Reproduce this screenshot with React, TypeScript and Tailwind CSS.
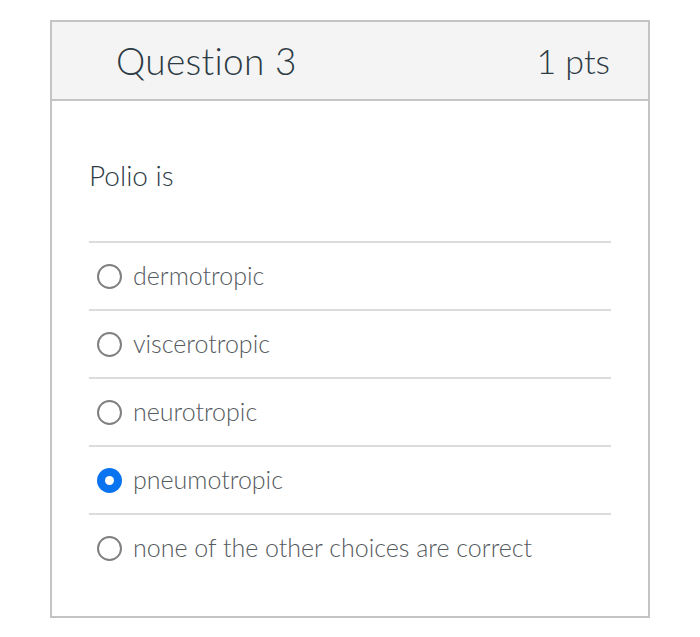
const options = [
  { label: "dermotropic", checked: false },
  { label: "viscerotropic", checked: false },
  { label: "neurotropic", checked: false },
  { label: "pneumotropic", checked: true },
  { label: "none of the other choices are correct", checked: false },
];

function Radio({ checked }: { checked: boolean }) {
  if (checked) {
    return (
      <span className="flex h-[25px] w-[25px] shrink-0 items-center justify-center rounded-full bg-[#0a74f0]">
        <span className="h-[9px] w-[9px] rounded-full bg-white" />
      </span>
    );
  }
  return (
    <span className="h-[25px] w-[25px] shrink-0 rounded-full border-[2.5px] border-[#808080] bg-white" />
  );
}

export default function App() {
  return (
    <div className="min-h-screen bg-white pt-[20px] font-['Lato','Noto_Sans',sans-serif] font-light">
      <div className="ml-[50px] w-[600px] border-2 border-[#c4c4c4] bg-white">
        <div className="flex h-[79px] items-center justify-between border-b-2 border-[#c4c4c4] bg-[#f4f4f4] pl-[64px] pr-[38px] text-[#2d3b45]">
          <h2 className="text-[37px] tracking-[0.3px]">Question 3</h2>
          <span className="text-[34px]">1 pts</span>
        </div>
        <div className="px-[37px] pb-[35px] pt-[54px]">
          <p className="mb-[46px] text-[28px] leading-[40px] text-[#2d3b45]">Polio is</p>
          <div>
            {options.map((o) => (
              <div
                key={o.label}
                className="flex h-[68px] items-center gap-[11px] border-t-2 border-[#dcdcdc] pl-[8px]"
              >
                <Radio checked={o.checked} />
                <span className="text-[25px] text-[#555a5e]">{o.label}</span>
              </div>
            ))}
          </div>
        </div>
      </div>
    </div>
  );
}
